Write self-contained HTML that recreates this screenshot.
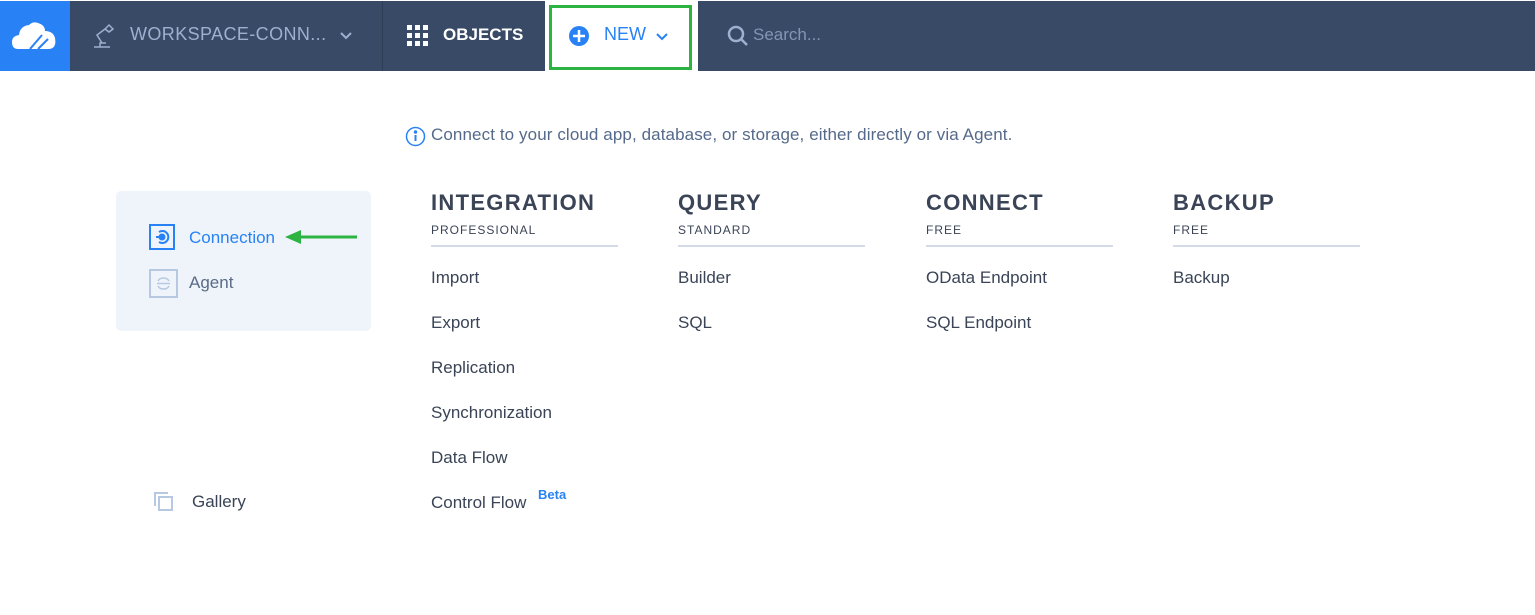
<!DOCTYPE html>
<html><head><style>
body{margin:0;width:1535px;height:615px;background:#fff;font-family:"Liberation Sans",sans-serif;position:relative;overflow:hidden}
.bar{position:absolute;top:1px;left:0;width:1535px;height:70px;background:#394a66}
.abs{position:absolute}
.logo{left:0;top:1px;width:70px;height:70px;background:#2882f5}
.sep{top:1px;width:1px;height:70px;background:#2f3e57}
.nav{color:#9db0d0;font-size:18px;top:24px}
.h{font-size:22px;font-weight:bold;color:#3a4456;letter-spacing:1.3px;top:190px}
.sub{font-size:12px;color:#3a4456;letter-spacing:1px;top:223px}
.line{height:2px;background:#d4dbe6;width:187px;top:245px}
.it{font-size:17px;color:#3a4456}
</style></head><body>
<div class="bar"></div>
<div class="abs logo"><svg width="70" height="70" viewBox="0 0 70 70"><path d="M18 48 Q12 48 12 41 Q12 35 19 34 Q20 25 29 24 Q33 20 38 22 Q45 24 45 30 Q53 30 55 37 Q57 48 48 48 Z" fill="#fff"/><path d="M30 48 L42 34 M38 48 L48 38" stroke="#2882f5" stroke-width="2"/></svg></div>
<div class="abs sep" style="left:382px"></div>
<svg class="abs" style="left:90px;top:22px" width="28" height="28" viewBox="0 0 28 28" fill="none" stroke="#9db0d0" stroke-width="1.5"><path d="M4 25h16M10 25v-4h6M12 21l-5-8 8-6M15 7l4-4 4 4-4 3z"/></svg>
<div class="abs nav" style="left:130px;letter-spacing:0.4px">WORKSPACE-CONN...</div>
<svg class="abs" style="left:339px;top:31px" width="14" height="10"><path d="M2 2l5 5 5-5" stroke="#9db0d0" stroke-width="2" fill="none"/></svg>
<svg class="abs" style="left:407px;top:25px" width="21" height="21" fill="#fff"><rect x="0" y="0" width="5" height="5"/><rect x="8" y="0" width="5" height="5"/><rect x="16" y="0" width="5" height="5"/><rect x="0" y="8" width="5" height="5"/><rect x="8" y="8" width="5" height="5"/><rect x="16" y="8" width="5" height="5"/><rect x="0" y="16" width="5" height="5"/><rect x="8" y="16" width="5" height="5"/><rect x="16" y="16" width="5" height="5"/></svg>
<div class="abs nav" style="left:443px;color:#fff;font-weight:bold;font-size:17px;top:25px">OBJECTS</div>
<div class="abs" style="left:545px;top:1px;width:153px;height:70px;background:#fff"></div>
<div class="abs" style="left:549px;top:5px;width:137px;height:59px;border:3px solid #2db341"></div>
<svg class="abs" style="left:568px;top:25px" width="22" height="22"><circle cx="11" cy="11" r="10" fill="#2882f5"/><path d="M11 5v12M5 11h12" stroke="#fff" stroke-width="2.5"/></svg>
<div class="abs nav" style="left:604px;color:#2882f5">NEW</div>
<svg class="abs" style="left:655px;top:32px" width="14" height="10"><path d="M2 2l5 5 5-5" stroke="#2882f5" stroke-width="2" fill="none"/></svg>
<svg class="abs" style="left:727px;top:25px" width="22" height="22" fill="none" stroke="#9db0d0" stroke-width="2.5"><circle cx="9" cy="9" r="7"/><path d="M14 14l6 6"/></svg>
<div class="abs nav" style="left:753px;color:#8295b5;font-size:17px;top:25px">Search...</div>

<svg class="abs" style="left:405px;top:126px" width="21" height="21" fill="none" stroke="#2882f5" stroke-width="1.5"><circle cx="10.5" cy="10.5" r="9"/><path d="M10.5 9v6" stroke-width="2"/><circle cx="10.5" cy="6" r="1" fill="#2882f5"/></svg>
<div class="abs" style="left:431px;top:125px;font-size:17px;color:#556a8a;letter-spacing:0.1px">Connect to your cloud app, database, or storage, either directly or via Agent.</div>

<div class="abs" style="left:116px;top:191px;width:255px;height:140px;background:#eff4fb;border-radius:5px"></div>
<div class="abs" style="left:149px;top:224px;width:26px;height:26px;border:2px solid #2882f5;box-sizing:border-box"></div>
<svg class="abs" style="left:149px;top:224px" width="26" height="26" fill="none" stroke="#2882f5" stroke-width="2"><path d="M10 8a6 6 0 1 1 0 10"/><circle cx="13" cy="13" r="2.5" fill="#2882f5"/><path d="M7 13h5"/></svg>
<div class="abs it" style="left:189px;top:228px;color:#2882f5">Connection</div>
<svg class="abs" style="left:285px;top:229px" width="73" height="16"><path d="M14 8h58" stroke="#2db341" stroke-width="3"/><path d="M0 8l16-7v14z" fill="#2db341"/></svg>
<div class="abs" style="left:149px;top:269px;width:29px;height:29px;border:2px solid #b6c8e2;box-sizing:border-box"></div>
<svg class="abs" style="left:149px;top:269px" width="29" height="29" fill="none" stroke="#b6c8e2" stroke-width="1.5"><path d="M9 12a6 5 0 0 1 11 0M9 17a6 5 0 0 0 11 0M8 14.5h13"/></svg>
<div class="abs it" style="left:189px;top:273px;color:#5a6b85">Agent</div>
<svg class="abs" style="left:154px;top:492px" width="20" height="20" fill="none" stroke="#b6c8e2" stroke-width="2"><rect x="5" y="5" width="13" height="13"/><path d="M1 14V1h13"/></svg>
<div class="abs it" style="left:192px;top:492px">Gallery</div>

<div class="abs h" style="left:431px">INTEGRATION</div><div class="abs sub" style="left:431px">PROFESSIONAL</div><div class="abs line" style="left:431px"></div>
<div class="abs h" style="left:678px">QUERY</div><div class="abs sub" style="left:678px">STANDARD</div><div class="abs line" style="left:678px"></div>
<div class="abs h" style="left:926px">CONNECT</div><div class="abs sub" style="left:926px">FREE</div><div class="abs line" style="left:926px"></div>
<div class="abs h" style="left:1173px">BACKUP</div><div class="abs sub" style="left:1173px">FREE</div><div class="abs line" style="left:1173px"></div>

<div class="abs it" style="left:431px;top:268px">Import</div>
<div class="abs it" style="left:431px;top:313px">Export</div>
<div class="abs it" style="left:431px;top:358px">Replication</div>
<div class="abs it" style="left:431px;top:403px">Synchronization</div>
<div class="abs it" style="left:431px;top:448px">Data Flow</div>
<div class="abs it" style="left:431px;top:493px">Control Flow</div>
<div class="abs" style="left:538px;top:487px;font-size:13px;font-weight:bold;color:#2882f5">Beta</div>
<div class="abs it" style="left:678px;top:268px">Builder</div>
<div class="abs it" style="left:678px;top:313px">SQL</div>
<div class="abs it" style="left:926px;top:268px">OData Endpoint</div>
<div class="abs it" style="left:926px;top:313px">SQL Endpoint</div>
<div class="abs it" style="left:1173px;top:268px">Backup</div>
</body></html>
